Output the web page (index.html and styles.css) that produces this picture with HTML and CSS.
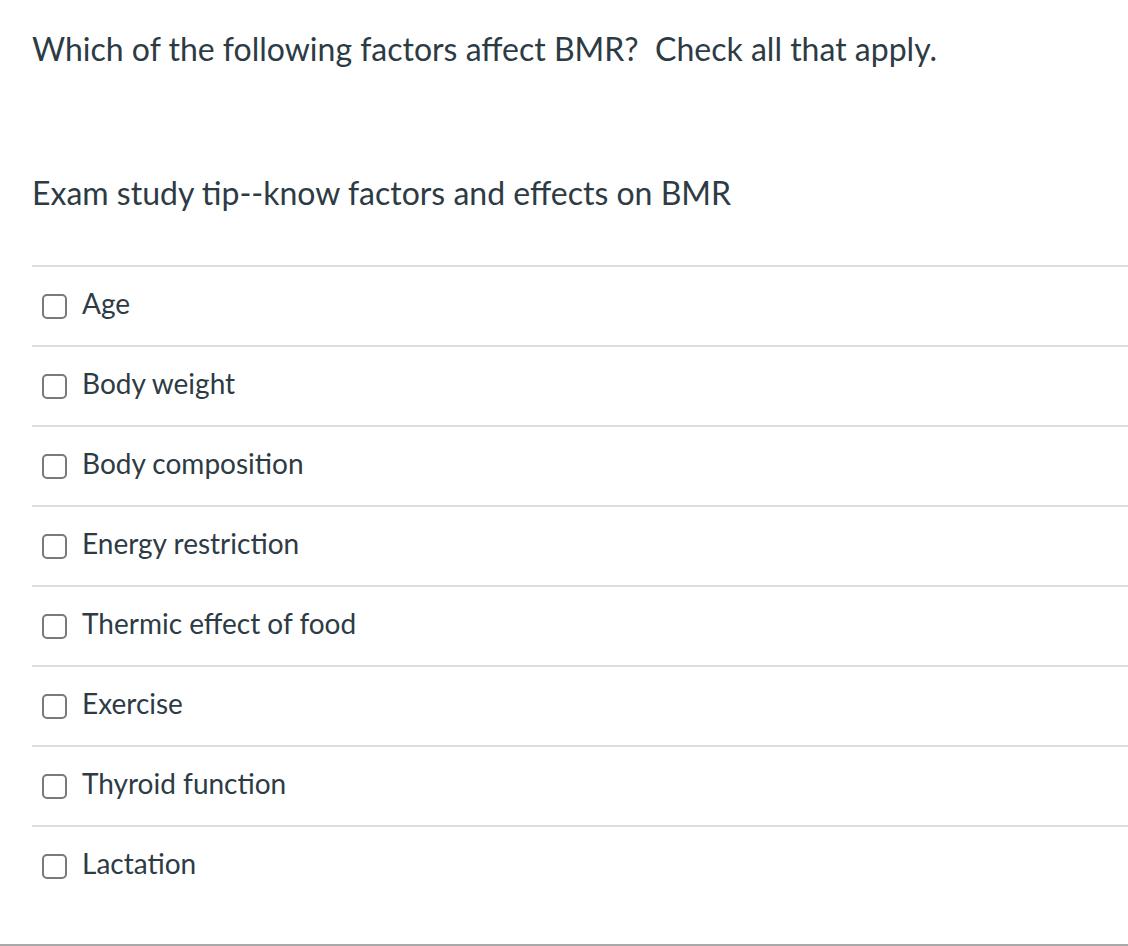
FILE: index.html
```html
<!DOCTYPE html>
<html lang="en">
<head>
<meta charset="utf-8">
<title>Quiz question</title>
<link rel="stylesheet" href="styles.css">
</head>
<body>
<div class="question">
  <p class="question-text">Which of the following factors affect BMR?&nbsp; Check all that apply.</p>
  <p class="question-tip">Exam study tip--know factors and effects on BMR</p>
  <ul class="answers">
    <li class="answer"><span class="box"></span><span class="label">Age</span></li>
    <li class="answer"><span class="box"></span><span class="label">Body weight</span></li>
    <li class="answer"><span class="box"></span><span class="label">Body composition</span></li>
    <li class="answer"><span class="box"></span><span class="label">Energy restriction</span></li>
    <li class="answer"><span class="box"></span><span class="label">Thermic effect of food</span></li>
    <li class="answer"><span class="box"></span><span class="label">Exercise</span></li>
    <li class="answer"><span class="box"></span><span class="label">Thyroid function</span></li>
    <li class="answer"><span class="box"></span><span class="label">Lactation</span></li>
  </ul>
</div>
<div class="footer-line"></div>
</body>
</html>
```
FILE: styles.css
```css
html, body {
  margin: 0;
  padding: 0;
  background: #ffffff;
}
body {
  font-family: Lato, "Open Sans", sans-serif;
  color: #2d3b45;
  width: 1128px;
  height: 946px;
  overflow: hidden;
}
.question {
  padding: 29px 0 0 32px;
}
.question-text {
  margin: 0;
  font-size: 32px;
  line-height: 40px;
}
.question-tip {
  margin: 104px 0 0 0;
  font-size: 32px;
  line-height: 40px;
}
.answers {
  list-style: none;
  margin: 52px 0 0 0;
  padding: 0;
}
.answer {
  display: flex;
  align-items: flex-start;
  height: 78px;
  border-top: 2px solid #dddddd;
  padding: 0 0 0 10px;
  box-sizing: content-box;
}
.box {
  flex: none;
  width: 25px;
  height: 25px;
  box-sizing: border-box;
  border: 2px solid #7a7a7a;
  border-radius: 5px;
  margin-top: 27px;
}
.label {
  margin: 19px 0 0 15px;
  font-size: 28px;
  line-height: 34px;
}
.footer-line {
  margin-top: 39px;
  border-top: 2px solid #a9a9a9;
}
```
